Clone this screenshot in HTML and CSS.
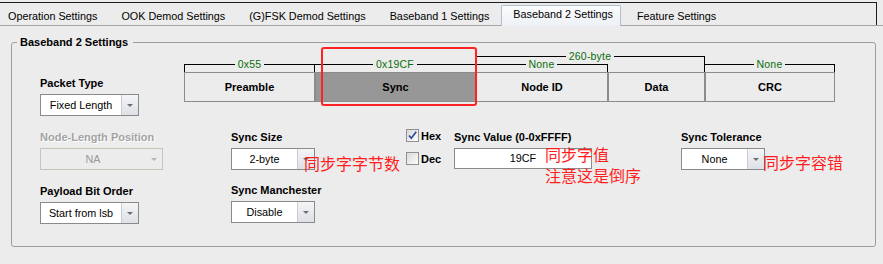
FILE: index.html
```html
<!DOCTYPE html>
<html lang="zh-CN">
<head>
    <meta charset="UTF-8">
    <title>Baseband 2 Settings</title>
    <link rel="stylesheet" href="styles.css">
</head>
<body>

<div class="window">
    <div class="tabbar">
        <div class="tab-row">
            <div class="tab">Operation Settings</div>
            <div class="tab">OOK Demod Settings</div>
            <div class="tab">(G)FSK Demod Settings</div>
            <div class="tab">Baseband 1 Settings</div>
            <div class="tab active">Baseband 2 Settings</div>
            <div class="tab">Feature Settings</div>
        </div>
    </div>

    <fieldset class="group">
        <legend>Baseband 2 Settings</legend>
        <div class="group-body">
            <div class="col-left">
                <div class="field">
                    <div class="label">Packet Type</div>
                    <div class="combo w99"><span class="combo-value">Fixed Length</span><span class="combo-btn"></span></div>
                </div>
                <div class="field">
                    <div class="label disabled">Node-Length Position</div>
                    <div class="combo w123 is-disabled"><span class="combo-value">NA</span><span class="combo-btn"></span></div>
                </div>
                <div class="field">
                    <div class="label">Payload Bit Order</div>
                    <div class="combo w99"><span class="combo-value">Start from lsb</span><span class="combo-btn"></span></div>
                </div>
            </div>

            <div class="col-right">
                <div class="packet">
                    <div class="bracket-row">
                        <div class="brk-space s291"></div>
                        <div class="brk brk-l brk-r s230"><span>260-byte</span></div>
                    </div>
                    <div class="bracket-row">
                        <div class="brk brk-l s130"><span>0x55</span></div>
                        <div class="brk brk-l s161"><span>0x19CF</span></div>
                        <div class="brk brk-l brk-r s133"><span>None</span></div>
                        <div class="brk-space brk-r s97"></div>
                        <div class="brk brk-r s130"><span>None</span></div>
                    </div>
                    <div class="frames">
                        <div class="frame f-pre">Preamble</div>
                        <div class="frame f-sync">Sync</div>
                        <div class="frame f-node">Node ID</div>
                        <div class="frame f-data">Data</div>
                        <div class="frame f-crc">CRC</div>
                    </div>
                </div>

                <div class="form-grid">
                    <div class="col-sync">
                        <div class="field">
                            <div class="label">Sync Size</div>
                            <div class="combo w84"><span class="combo-value">2-byte</span><span class="combo-btn"></span></div>
                        </div>
                        <div class="field">
                            <div class="label">Sync Manchester</div>
                            <div class="combo w84"><span class="combo-value">Disable</span><span class="combo-btn"></span></div>
                        </div>
                    </div>

                    <div class="checks">
                        <div class="check">
                            <span class="box">
                                <svg width="11" height="11" viewBox="0 0 11 11"><path d="M2 5.5 L4.3 8.2 L9.2 1.8" fill="none" stroke="#2a4a9e" stroke-width="1.7"/></svg>
                            </span>
                            Hex
                        </div>
                        <div class="check">
                            <span class="box"></span>
                            Dec
                        </div>
                    </div>

                    <div class="field">
                        <div class="label">Sync Value (0-0xFFFF)</div>
                        <div class="textbox">19CF</div>
                    </div>

                    <div class="field">
                        <div class="label">Sync Tolerance</div>
                        <div class="combo w84"><span class="combo-value">None</span><span class="combo-btn"></span></div>
                    </div>
                </div>
            </div>
        </div>
    </fieldset>

    <!-- 注释 -->
    <div class="highlight"></div>
    <div class="note note-size">同步字字节数</div>
    <div class="note note-value">同步字值<br>注意这是倒序</div>
    <div class="note note-tol">同步字容错</div>
</div>

</body>
</html>
```

FILE: styles.css
```css
body {
    margin: 0;
    background-color: #ececec;
    font-family: "Liberation Sans", Arial, sans-serif;
    font-size: 11px;
    color: #000;
}

.window {
    position: relative;
    width: 883px;
    height: 264px;
    overflow: hidden;
}

/* タブ */
.tabbar {
    padding-top: 2px;
    border-bottom: 1px solid #a5a5a5;
}

.tab-row {
    display: flex;
    align-items: flex-end;
    width: 876px;
    height: 22px;
    border-top: 1px solid #1e1e1e;
    border-right: 1px solid #1e1e1e;
}

.tab {
    padding: 4px 12px 0;
    line-height: 18px;
    font-size: 10.8px;
    white-space: nowrap;
}

.tab:first-child {
    padding-left: 8px;
}

.tab.active {
    margin-bottom: -1px;
    margin-right: 4px;
    padding: 0 7px 4px 11px;
    line-height: 16px;
    border: 1px solid #b4bfcb;
    border-bottom: none;
    border-radius: 2px 2px 0 0;
    background: linear-gradient(#fbfcfd, #edf1f5);
}

/* グループ */
.group {
    margin: 10px 0 0 11px;
    padding: 0;
    width: 865px;
    height: 211px;
    box-sizing: border-box;
    border: 1px solid #9d9d9d;
    border-radius: 3px;
}

.group legend {
    margin-left: 5px;
    padding: 0 5px 0 3px;
    font-weight: bold;
    font-size: 11px;
    line-height: 13px;
}

.group-body {
    display: flex;
    padding-left: 28px;
}

.col-left {
    width: 144px;
    padding-top: 28px;
}

.col-left .field + .field {
    margin-top: 15px;
}

.col-right {
    flex: 1;
    padding-top: 7px;
}

.label {
    font-weight: bold;
    line-height: 13px;
    margin-bottom: 4px;
    white-space: nowrap;
}

.label.disabled {
    color: #a3a3a3;
    text-shadow: 1px 1px 0 #fff;
}

/* コンボボックス */
.combo {
    display: flex;
    height: 22px;
    box-sizing: border-box;
    border: 1px solid #8a8a8a;
    background-color: #fff;
}

.w84 { width: 84px; }
.w99 { width: 99px; }
.w123 { width: 123px; }

.combo-value {
    flex: 1;
    text-align: center;
    line-height: 20px;
    font-size: 10.8px;
    white-space: nowrap;
}

.combo-btn {
    width: 17px;
    box-sizing: border-box;
    border-left: 1px solid #c9cdd3;
    background: linear-gradient(#f4f5f7, #dde0e5);
    display: flex;
    align-items: center;
    justify-content: center;
}

.combo-btn::after {
    content: "";
    border-left: 3px solid transparent;
    border-right: 3px solid transparent;
    border-top: 3px solid #6f6f6f;
}

.combo.is-disabled {
    border-color: #c3c6b8;
    background-color: #ececec;
    color: #9a9a9a;
}

.combo.is-disabled .combo-btn {
    border-left: none;
    background: none;
}

.combo.is-disabled .combo-btn::after {
    border-top-color: #b5b5b5;
}

/* パケット構成図 */
.bracket-row {
    display: flex;
    height: 8px;
}

.brk, .brk-space {
    box-sizing: border-box;
    height: 8px;
}

.brk {
    border-top: 1px solid #000;
    text-align: center;
    line-height: 12px;
}

.brk-l { border-left: 1px solid #000; }
.brk-r { border-right: 1px solid #000; }

.brk span {
    position: relative;
    top: -7px;
    padding: 0 3px;
    background-color: #ececec;
    color: #0b6e0b;
    font-size: 10.5px;
    letter-spacing: 0.2px;
}

.s97 { width: 97px; }
.s130 { width: 130px; }
.s133 { width: 133px; }
.s161 { width: 161px; }
.s230 { width: 230px; }
.s291 { width: 291px; }

.frames {
    display: flex;
    width: 651px;
    height: 30px;
    box-sizing: border-box;
    border: 1px solid #8c8c8c;
}

.frame {
    box-sizing: border-box;
    font-weight: bold;
    text-align: center;
    line-height: 28px;
}

.f-pre { width: 129px; }
.f-sync { width: 161px; border-left: 2px solid #8c8c8c; background-color: #979797; }
.f-node { width: 132px; border-left: 2px solid #8c8c8c; }
.f-data { width: 97px; border-left: 2px solid #8c8c8c; }
.f-crc { width: 130px; border-left: 2px solid #8c8c8c; }

/* 設定項目 */
.form-grid {
    display: grid;
    grid-template-columns: 175px 48px 227px auto;
    margin: 29px 0 0 47px;
}

.col-sync .field + .field {
    margin-top: 14px;
}

.checks {
    margin-top: -2px;
    display: flex;
    flex-direction: column;
    gap: 10px;
}

.check {
    display: flex;
    align-items: center;
    gap: 2px;
    height: 13px;
    font-weight: bold;
}

.box {
    width: 13px;
    height: 13px;
    box-sizing: border-box;
    border: 1px solid #8f8f8f;
    background: linear-gradient(135deg, #d9d9d9, #fdfdfd);
}

.box svg {
    display: block;
}

.textbox {
    width: 138px;
    height: 21px;
    box-sizing: border-box;
    border: 1px solid #8a8a8a;
    background-color: #fff;
    text-align: center;
    line-height: 19px;
    font-size: 10.8px;
}

/* 赤い注釈 */
.highlight {
    position: absolute;
    left: 321px;
    top: 47px;
    width: 156px;
    height: 59px;
    box-sizing: border-box;
    border: 2px solid #ff2222;
    border-radius: 3px;
}

.note {
    position: absolute;
    color: #ff1e1e;
    font-family: "Noto Sans CJK SC", sans-serif;
    font-size: 16px;
    line-height: 16px;
    white-space: nowrap;
}

.note-size { left: 304px; top: 155px; }
.note-value { left: 545px; top: 144px; line-height: 21px; }
.note-tol { left: 763px; top: 154px; }
```
